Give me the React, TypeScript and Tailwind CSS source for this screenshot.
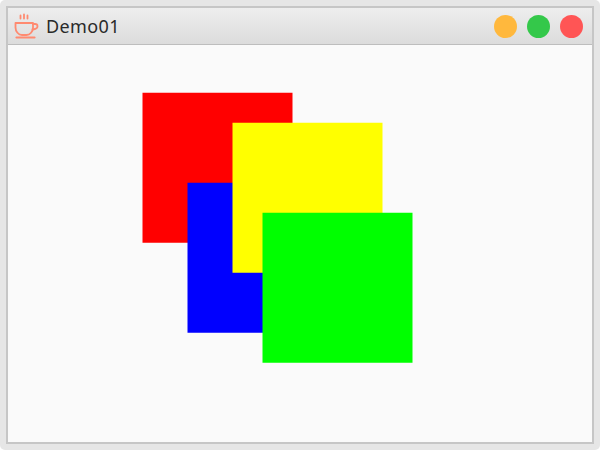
export default function App() {
  return (
    <div className="w-[600px] h-[450px] bg-white">
      <div className="h-full rounded-[5px] bg-[#e6e6e6] p-[6px] font-['Noto_Sans','Open_Sans',sans-serif]">
        <div className="h-full border-2 border-[#c6c6c6] flex flex-col">
          {/* Title bar */}
          <div className="h-[37px] flex items-center pl-[5px] pr-[9px] border-b border-[#bdbdbd] bg-gradient-to-b from-[#eeeeee] to-[#dcdcdc]">
            <svg width="26" height="26" viewBox="0 0 26 26" fill="none" stroke="#ff8a70" strokeWidth="1.8" strokeLinecap="round" strokeLinejoin="round">
              <path d="M7.500 2.500v3M11 1.500v4M14.500 2.500v3" />
              <path d="M2.500 10h17.500v4.500c0 4-3 7.500-6.500 7.500H9c-3.500 0-6.500-3.500-6.500-7.500z" />
              <path d="M20 11h2c1.500 0 2.500 1 2.500 2.300s-1 2.400-2.500 2.700l-2.500.5" />
              <path d="M3.500 24.500h18" strokeWidth="2.200" />
            </svg>
            <span className="ml-[7px] text-[18px] leading-none tracking-[0.4px] text-[#2a2a2a]">Demo01</span>
            <div className="ml-auto flex items-center gap-[10px]">
              <div className="w-[23px] h-[23px] rounded-full bg-[#ffb83d]" />
              <div className="w-[23px] h-[23px] rounded-full bg-[#34c84a]" />
              <div className="w-[23px] h-[23px] rounded-full bg-[#ff5555]" />
            </div>
          </div>
          {/* Canvas */}
          <div className="relative flex-1 bg-[#fafafa]">
            <div className="absolute left-[134px] top-[47px] w-[150px] h-[150px] translate-x-[0.5px] translate-y-[0.75px] bg-[#ff0000]" />
            <div className="absolute left-[179px] top-[137px] w-[150px] h-[150px] translate-x-[0.5px] translate-y-[0.75px] bg-[#0000ff]" />
            <div className="absolute left-[224px] top-[77px] w-[150px] h-[150px] translate-x-[0.5px] translate-y-[0.75px] bg-[#ffff00]" />
            <div className="absolute left-[254px] top-[167px] w-[150px] h-[150px] translate-x-[0.5px] translate-y-[0.75px] bg-[#00ff00]" />
          </div>
        </div>
      </div>
    </div>
  );
}
